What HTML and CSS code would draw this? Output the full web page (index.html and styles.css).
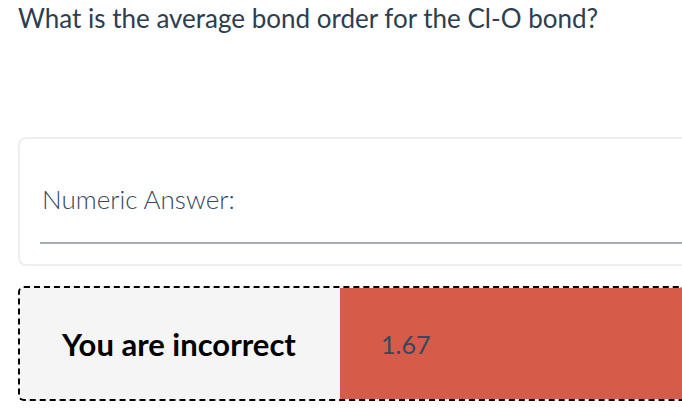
FILE: index.html
```html
<!DOCTYPE html>
<html lang="en">
<head>
    <meta charset="UTF-8">
    <meta name="viewport" content="width=device-width, initial-scale=1.0">
    <title>Bond Order Question</title>
    <link rel="stylesheet" href="styles.css">
</head>
<body>
    <div class="question-container">
        <h2 class="question">What is the average bond order for the Cl-O bond?</h2>

        <div class="answer-card">
            <div class="answer-field">
                <label for="numericAnswer">Numeric Answer:</label>
            </div>
        </div>

        <div class="result-box">
            <div class="result-label">You are incorrect</div>
            <div class="result-value">1.67</div>
        </div>
    </div>
</body>
</html>
```

FILE: styles.css
```css
body {
    font-family: Lato, "Open Sans", sans-serif;
    background-color: white;
    color: #2c3e50;
    margin: 0;
    padding: 0;
    overflow: hidden;
}

.question-container {
    padding-left: 18px;
}

.question {
    margin: 0;
    font-size: 26px;
    font-weight: 400;
    line-height: 36px;
    color: #2c3e50;
}

/* card runs off the right edge, so no right border */
.answer-card {
    margin-top: 101px;
    border: 2px solid #eeeeee;
    border-right: none;
    border-radius: 8px 0 0 8px;
    padding: 42px 0 20px 20px;
}

.answer-field {
    border-bottom: 2px solid #a4adb6;
    padding: 0 0 25px 2px;
}

.answer-field label {
    display: block;
    font-size: 26px;
    font-weight: 300;
    line-height: 36px;
    color: #34495e;
}

.result-box {
    margin-top: 20px;
    display: flex;
    height: 111px;
    border: 2px dashed #000;
    border-right: none;
    border-radius: 6px 0 0 6px;
    background-color: #f5f5f5;
    overflow: hidden;
}

.result-label {
    width: 320px;
    padding-left: 42px;
    box-sizing: border-box;
    display: flex;
    align-items: center;
    font-size: 31px;
    font-weight: 700;
    color: #000;
}

.result-value {
    flex: 1;
    display: flex;
    align-items: center;
    padding-left: 41px;
    background-color: #d65b48;
    font-size: 25px;
    color: #34495e;
}
```
